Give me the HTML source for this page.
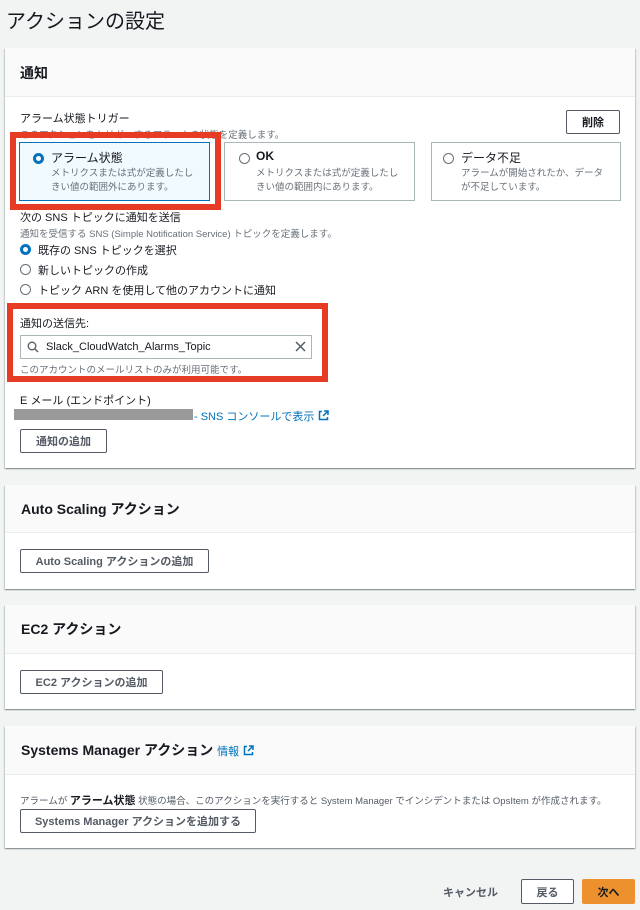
<!DOCTYPE html>
<html><head><meta charset="utf-8"><style>
*{box-sizing:border-box;margin:0;padding:0}
body{width:640px;height:910px;background:#f2f3f3;font-family:"Liberation Sans","Noto Sans CJK JP",sans-serif;color:#16191f;position:relative;overflow:hidden}
.a{position:absolute;white-space:nowrap}
.panel{position:absolute;left:5px;width:630px;background:#fff;box-shadow:0 1px 1px 0 rgba(0,28,36,.3),1px 1px 1px 0 rgba(0,28,36,.15),-1px 1px 1px 0 rgba(0,28,36,.15)}
.hd{position:absolute;left:0;top:0;width:100%;background:#fafafa;border-bottom:1px solid #eaeded}
.h{font-size:14px;font-weight:bold}
.btn{position:absolute;border:1px solid #545b64;background:#fff;color:#545b64;font-size:11px;font-weight:bold;display:flex;align-items:center;justify-content:center;border-radius:2px}
.s{font-size:11px}
.xs{font-size:9.5px;color:#687078}
.rad{position:absolute;width:11px;height:11px;border-radius:50%;border:1px solid #687078;background:#fff}
.rad.on{border:3.5px solid #0073bb}
.card{position:absolute;border:1px solid #aab7b8;background:#fff}
.red{position:absolute;border:6px solid #e63c25}
.link{color:#0073bb}
svg.i{vertical-align:-1px;margin-left:4px}
</style></head><body>
<div class="a" style="left:6px;top:5px;font-size:20px;color:#16191f">アクションの設定</div>

<div class="panel" style="top:48px;height:420px">
 <div class="hd" style="height:49px"></div>
 <div class="a h" style="left:15px;top:15px">通知</div>
</div>
<div class="a s" style="left:20px;top:110px">アラーム状態トリガー</div>
<div class="a xs" style="left:20px;top:127px">このアクションをトリガーするアラームの状態を定義します。</div>
<div class="btn" style="left:566px;top:110px;width:54px;height:24px;color:#16191f">削除</div>
<div class="red" style="left:10px;top:132px;width:211px;height:78px"></div>
<div class="card" style="left:19px;top:142px;width:191px;height:59px;background:#f1faff;border-color:#0073bb"></div>
<div class="rad on" style="left:33px;top:153px"></div>
<div class="a" style="left:51px;top:149px;font-size:12px">アラーム状態</div>
<div class="a xs" style="left:51px;top:167px;line-height:14px">メトリクスまたは式が定義したし<br>きい値の範囲外にあります。</div>
<div class="card" style="left:224px;top:142px;width:191px;height:59px"></div>
<div class="rad" style="left:239px;top:153px"></div>
<div class="a" style="left:256px;top:149px;font-size:12px;font-weight:bold">OK</div>
<div class="a xs" style="left:256px;top:167px;line-height:14px">メトリクスまたは式が定義したし<br>きい値の範囲内にあります。</div>
<div class="card" style="left:431px;top:142px;width:190px;height:59px"></div>
<div class="rad" style="left:443px;top:153px"></div>
<div class="a" style="left:461px;top:149px;font-size:12px">データ不足</div>
<div class="a xs" style="left:461px;top:167px;line-height:14px">アラームが開始されたか、データ<br>が不足しています。</div>

<div class="a s" style="left:20px;top:209px">次の SNS トピックに通知を送信</div>
<div class="a xs" style="left:20px;top:226px">通知を受信する SNS (Simple Notification Service) トピックを定義します。</div>
<div class="rad on" style="left:20px;top:244px"></div>
<div class="a s" style="left:38px;top:242px">既存の SNS トピックを選択</div>
<div class="rad" style="left:20px;top:264px"></div>
<div class="a s" style="left:38px;top:262px">新しいトピックの作成</div>
<div class="rad" style="left:20px;top:284px"></div>
<div class="a s" style="left:38px;top:282px">トピック ARN を使用して他のアカウントに通知</div>

<div class="red" style="left:7px;top:303px;width:321px;height:79px"></div>
<div class="a s" style="left:20px;top:315px">通知の送信先:</div>
<div class="a" style="left:20px;top:335px;width:292px;height:24px;border:1px solid #aab7b8;background:#fff"></div>
<svg class="a" style="left:27px;top:341px" width="12" height="12" viewBox="0 0 12 12"><circle cx="5" cy="5" r="3.8" fill="none" stroke="#545b64" stroke-width="1.3"/><path d="M8 8l3 3" stroke="#545b64" stroke-width="1.4"/></svg>
<div class="a s" style="left:46px;top:341px;color:#16191f">Slack_CloudWatch_Alarms_Topic</div>
<svg class="a" style="left:295px;top:341px" width="11" height="11" viewBox="0 0 11 11"><path d="M1 1l9 9M10 1l-9 9" stroke="#545b64" stroke-width="1.5"/></svg>
<div class="a xs" style="left:20px;top:362px">このアカウントのメールリストのみが利用可能です。</div>

<div class="a s" style="left:20px;top:392px">E メール (エンドポイント)</div>
<div class="a" style="left:14px;top:409px;width:179px;height:11px;background:#999"></div>
<div class="a s" style="left:194px;top:408px"><span class="link">- SNS コンソールで表示</span><svg class="i" width="11" height="11" viewBox="0 0 11 11"><path d="M4 1.5H1.5v8h8V7M6 1h4v4M10 1L5 6" fill="none" stroke="#0073bb" stroke-width="1.5"/></svg></div>
<div class="btn" style="left:20px;top:429px;width:87px;height:24px">通知の追加</div>

<div class="panel" style="top:485px;height:104px">
 <div class="hd" style="height:48px"></div>
 <div class="a h" style="left:16px;top:14px">Auto Scaling アクション</div>
</div>
<div class="btn" style="left:20px;top:549px;width:189px;height:24px">Auto Scaling アクションの追加</div>

<div class="panel" style="top:605px;height:104px">
 <div class="hd" style="height:49px"></div>
 <div class="a h" style="left:16px;top:14px">EC2 アクション</div>
</div>
<div class="btn" style="left:20px;top:670px;width:143px;height:24px">EC2 アクションの追加</div>

<div class="panel" style="top:726px;height:122px">
 <div class="hd" style="height:49px"></div>
 <div class="a h" style="left:16px;top:14px">Systems Manager アクション <span class="link" style="font-size:11px;font-weight:normal">情報</span><svg class="i" width="11" height="11" viewBox="0 0 11 11"><path d="M4 1.5H1.5v8h8V7M6 1h4v4M10 1L5 6" fill="none" stroke="#0073bb" stroke-width="1.5"/></svg></div>
</div>
<div class="a" style="left:20px;top:792px;font-size:9.5px;color:#545b64">アラームが <b style="font-size:11px;color:#16191f">アラーム状態</b> 状態の場合、このアクションを実行すると System Manager でインシデントまたは OpsItem が作成されます。</div>
<div class="btn" style="left:20px;top:809px;width:236px;height:24px">Systems Manager アクションを追加する</div>

<div class="a" style="left:443px;top:884px;font-size:11px;font-weight:bold;color:#545b64">キャンセル</div>
<div class="btn" style="left:521px;top:879px;width:53px;height:25px">戻る</div>
<div class="btn" style="left:582px;top:879px;width:53px;height:25px;background:#ec912d;border-color:#ec912d;color:#16191f">次へ</div>
</body></html>
